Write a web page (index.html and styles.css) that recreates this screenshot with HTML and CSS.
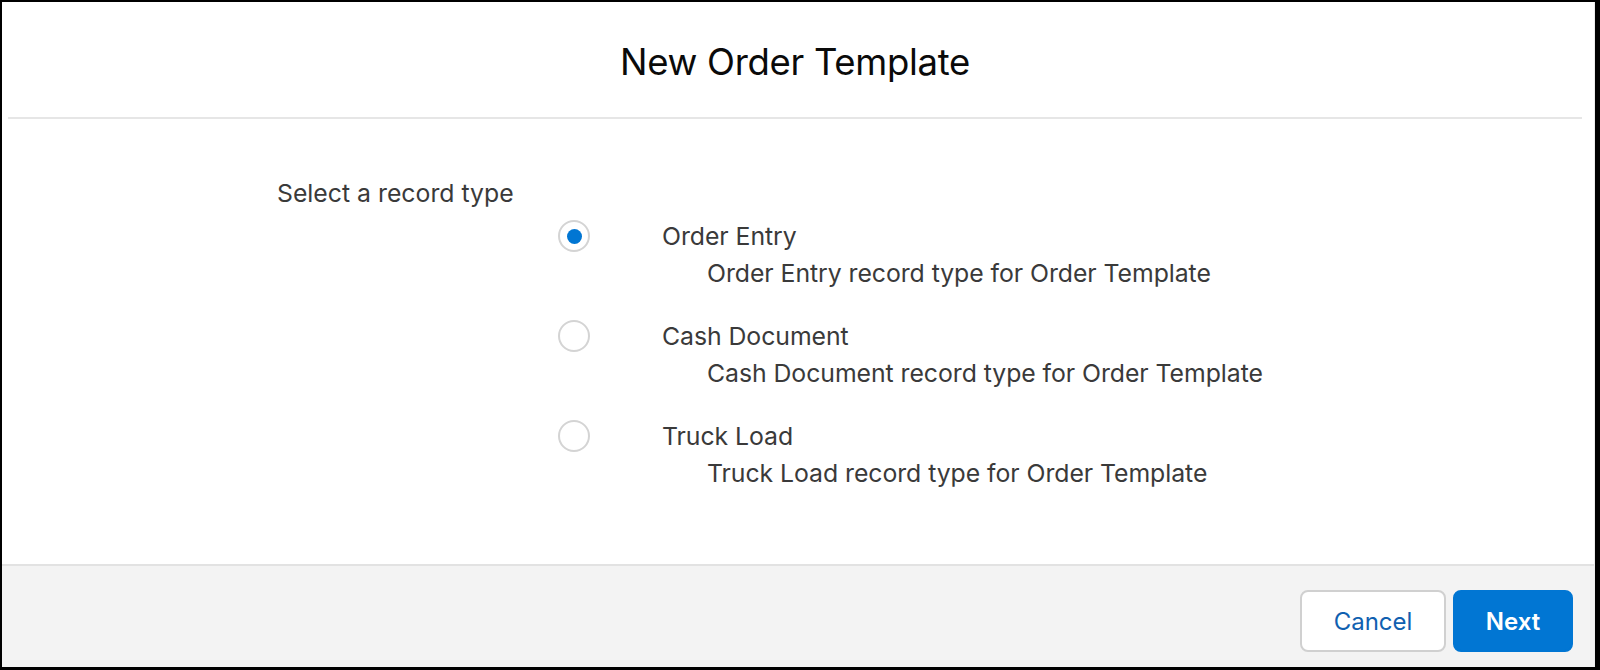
FILE: index.html
```html
<!DOCTYPE html>
<html lang="en">
<head>
<meta charset="utf-8">
<title>New Order Template</title>
<link rel="stylesheet" href="styles.css">
</head>
<body>
<div class="modal">
  <header class="modal-header">
    <h1 class="modal-title">New Order Template</h1>
  </header>
  <main class="modal-body">
    <div class="field-label">Select a record type</div>
    <div class="radio-group">
      <label class="radio-row">
        <span class="radio checked"><span class="dot"></span></span>
        <span class="radio-text">
          <span class="radio-label">Order Entry</span>
          <span class="radio-desc">Order Entry record type for Order Template</span>
        </span>
      </label>
      <label class="radio-row">
        <span class="radio"></span>
        <span class="radio-text">
          <span class="radio-label">Cash Document</span>
          <span class="radio-desc">Cash Document record type for Order Template</span>
        </span>
      </label>
      <label class="radio-row">
        <span class="radio"></span>
        <span class="radio-text">
          <span class="radio-label">Truck Load</span>
          <span class="radio-desc">Truck Load record type for Order Template</span>
        </span>
      </label>
    </div>
  </main>
  <footer class="modal-footer">
    <button class="btn btn-neutral">Cancel</button>
    <button class="btn btn-brand">Next</button>
  </footer>
</div>
</body>
</html>
```
FILE: styles.css
```css
* { box-sizing: border-box; }
html, body {
  margin: 0;
  padding: 0;
  height: 670px;
  overflow: hidden;
}
body {
  background: #000;
  font-family: Inter, "Liberation Sans", sans-serif;
  color: #3a3a3a;
}
.modal {
  margin: 2px 5px 0 2px;
  height: 665px;
  background: #fff;
  display: flex;
  flex-direction: column;
  border-right: 1px solid #ececec;
}
.modal-header {
  margin: 0 12px 0 6px;
  padding: 36px 0 31px;
  border-bottom: 2px solid #e6e6e6;
  text-align: center;
}
.modal-title {
  margin: 0;
  font-size: 36.5px;
  line-height: 48px;
  font-weight: 400;
  color: #0a0a0a;
  letter-spacing: -0.3px;
}
.modal-body {
  flex: 1;
  padding: 56px 0 0 275px;
}
.field-label {
  font-size: 24.8px;
  line-height: 36px;
}
.radio-group {
  margin: 7px 0 0 281px;
  display: flex;
  flex-direction: column;
  gap: 27px;
}
.radio-row {
  display: flex;
  align-items: flex-start;
  gap: 72px;
}
.radio {
  width: 32px;
  height: 32px;
  margin-top: 2px;
  border: 2px solid #d4d4d4;
  border-radius: 50%;
  display: flex;
  align-items: center;
  justify-content: center;
  flex: none;
}
.dot {
  width: 15px;
  height: 15px;
  border-radius: 50%;
  background: #0176d3;
}
.radio-text {
  display: flex;
  flex-direction: column;
  font-size: 24.8px;
  line-height: 36px;
  letter-spacing: -0.05px;
}
.radio-desc {
  margin: 1px 0 0 45px;
}
.modal-footer {
  height: 103px;
  border-top: 2px solid #e2e2e2;
  background: #f3f3f3;
  display: flex;
  justify-content: flex-end;
  align-items: flex-start;
  gap: 7px;
  padding: 24px 21px 0 0;
}
.btn {
  height: 62px;
  padding: 0 30px;
  border-radius: 8px;
  font-family: Inter, "Liberation Sans", sans-serif;
  font-size: 24px;
  cursor: pointer;
}
.btn-neutral {
  background: #fff;
  border: 2px solid #d0d0d0;
  color: #1060b0;
  font-weight: 400;
  width: 146px;
}
.btn-brand {
  background: #0176d3;
  border: 2px solid #0176d3;
  color: #fff;
  font-weight: 600;
  width: 120px;
}
```
